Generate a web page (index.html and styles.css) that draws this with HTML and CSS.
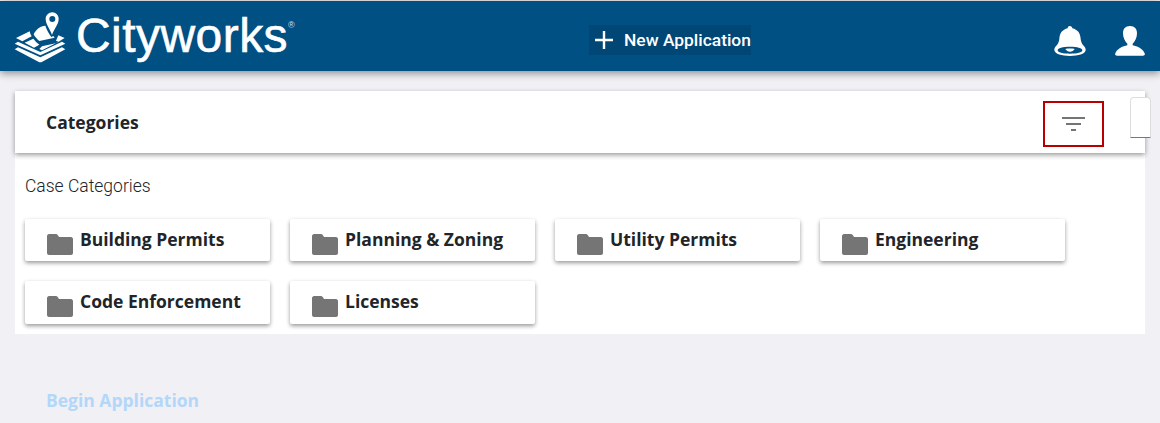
FILE: index.html
```html
<!DOCTYPE html>
<html lang="en">
<head>
<meta charset="utf-8">
<title>Cityworks</title>
<link rel="stylesheet" href="styles.css">
</head>
<body>
<header class="topbar">
  <div class="brand">
    <svg class="logo-mark" viewBox="0 0 195 180" width="65" height="60" aria-hidden="true">
      <path fill="#fff" fill-rule="evenodd" d="M127 22c-11 0-20 9-20 20 0 16 13 30 19 48 6-18 20-32 20-48 0-11-8-20-19-20zm0 11a9 9 0 1 1 0 18 9 9 0 0 1 0-18z"/>
      <path fill="#fff" d="M71 88c7-15 20-26 35-26 4 12 10 22 18 34l6-3 4 5-46 10c-7-6-13-12-17-20z"/>
      <path fill="#fff" d="M18 99l41-20c1 6 3 11 6 15L37 109zM44 113l26-12c5 7 11 13 18 18l-16 9zM96 124l44-10 24-13-68 35-8-4zM145 91l19 8-19 11-7-3z"/>
      <path fill="#fff" d="M14 116l10-6 67 31 65-31 10 6-75 35zM14 133l10-6 67 30 65-30 10 6-72 39h-6z"/>
    </svg>
    <span class="wordmark">Cityworks<sup class="reg">®</sup></span>
  </div>
  <div class="new-app">
    <svg viewBox="0 0 18 18" width="18" height="18" aria-hidden="true"><path d="M9 0v18M0 9h18" stroke="#fff" stroke-width="2.400"/></svg>
    <span>New Application</span>
  </div>
  <div class="top-icons">
    <svg viewBox="0 0 96 96" width="32" height="32" aria-hidden="true">
      <path fill="#fff" fill-rule="evenodd" d="M47 3c-4 0-6 3-6 7C25 14 17 24 16 42c-1 8-3 13-7 18C4 65 0 70 1 76c2 11 22 17 47 17s45-6 47-17c1-6-3-11-8-16-4-5-6-10-7-18-1-18-9-28-25-32 0-4-3-7-8-7zM48 65c22 0 37 4 37 11S70 86 48 86 11 83 11 76s15-11 37-11z"/>
      <path fill="#fff" d="M34 72c6-2 22-2 28 0-3 5-8 8-14 8s-11-3-14-8z"/>
    </svg>
    <svg viewBox="0 0 90 90" width="30" height="30" aria-hidden="true">
      <path fill="#fff" d="M45 0c14 0 21 9 21 22 0 13-6 25-13 31v5c14 3 32 10 37 27-1 2-3 4-6 4H6c-3 0-5-2-6-4 5-17 23-24 37-27v-5C30 47 24 35 24 22 24 9 31 0 45 0z"/>
    </svg>
  </div>
</header>

<main class="page">
  <section class="panel-head">
    <h1>Categories</h1>
    <button class="filter" type="button" aria-label="Filter">
      <svg viewBox="0 0 24 14" width="24" height="14" aria-hidden="true"><path d="M0 1h23M4 7h15M9 13h5" stroke="#757575" stroke-width="2"/></svg>
    </button>
    <div class="side-tab"></div>
  </section>
  <section class="categories">
    <p class="label">Case Categories</p>
    <div class="grid">
      <a class="tile"><svg class="folder" viewBox="0 0 26 21" width="26" height="21"><path fill="#757575" d="M2 0h7c1 0 2 1 3 3h12c1 0 2 1 2 2v14c0 1-1 2-2 2H2c-1 0-2-1-2-2V2c0-1 1-2 2-2z"/></svg><span>Building Permits</span></a>
      <a class="tile"><svg class="folder" viewBox="0 0 26 21" width="26" height="21"><path fill="#757575" d="M2 0h7c1 0 2 1 3 3h12c1 0 2 1 2 2v14c0 1-1 2-2 2H2c-1 0-2-1-2-2V2c0-1 1-2 2-2z"/></svg><span>Planning &amp; Zoning</span></a>
      <a class="tile"><svg class="folder" viewBox="0 0 26 21" width="26" height="21"><path fill="#757575" d="M2 0h7c1 0 2 1 3 3h12c1 0 2 1 2 2v14c0 1-1 2-2 2H2c-1 0-2-1-2-2V2c0-1 1-2 2-2z"/></svg><span>Utility Permits</span></a>
      <a class="tile"><svg class="folder" viewBox="0 0 26 21" width="26" height="21"><path fill="#757575" d="M2 0h7c1 0 2 1 3 3h12c1 0 2 1 2 2v14c0 1-1 2-2 2H2c-1 0-2-1-2-2V2c0-1 1-2 2-2z"/></svg><span>Engineering</span></a>
      <a class="tile"><svg class="folder" viewBox="0 0 26 21" width="26" height="21"><path fill="#757575" d="M2 0h7c1 0 2 1 3 3h12c1 0 2 1 2 2v14c0 1-1 2-2 2H2c-1 0-2-1-2-2V2c0-1 1-2 2-2z"/></svg><span>Code Enforcement</span></a>
      <a class="tile"><svg class="folder" viewBox="0 0 26 21" width="26" height="21"><path fill="#757575" d="M2 0h7c1 0 2 1 3 3h12c1 0 2 1 2 2v14c0 1-1 2-2 2H2c-1 0-2-1-2-2V2c0-1 1-2 2-2z"/></svg><span>Licenses</span></a>
    </div>
  </section>
  <h2 class="begin">Begin Application</h2>
</main>
</body>
</html>
```
FILE: styles.css
```css
html, body { margin: 0; padding: 0; }
body {
  width: 1160px; height: 423px; overflow: hidden;
  background: #f1f0f5;
  font-family: "Open Sans", sans-serif;
  color: #212529;
  box-sizing: border-box;
}
.topbar {
  height: 70px;
  margin-top: 1px;
  background: #005084;
  display: flex;
  align-items: center;
  box-shadow: 0 2px 8px rgba(0,0,0,.45);
  position: relative;
}
.brand { width: 579px; display: flex; align-items: center; padding-left: 10px; margin-bottom: 2px; }
.logo-mark { flex: none; }
.wordmark {
  font-family: "Liberation Sans", sans-serif;
  color: #fff;
  font-size: 48px;
  letter-spacing: .45px;
  line-height: 50px;
  -webkit-text-stroke: .6px #fff;
  margin: 2px 0 0 1px;
}
.reg { font-size: 9px; letter-spacing: 0; vertical-align: 24px; line-height: 0; opacity: .8; -webkit-text-stroke: 0; }
.new-app {
  display: flex; align-items: center; gap: 11px;
  width: 162px; box-sizing: border-box;
  height: 30px; padding: 0 0 0 6px;
  background: #004775;
  color: #fff;
  font-family: Roboto, sans-serif;
  font-weight: 500;
  font-size: 17.400px;
  white-space: nowrap;
  margin-top: 8px;
}
.new-app svg { flex: none; }
.top-icons { margin-left: auto; display: flex; align-items: center; gap: 29px; padding-right: 15px; padding-top: 10px; }
.page { padding: 20px 15px 0; }
.panel-head {
  height: 62px;
  background: #fff;
  display: flex; align-items: center;
  padding-left: 31px;
  box-shadow: 0 2px 5px rgba(0,0,0,.4);
  position: relative;
}
.panel-head h1 { flex: 1; margin: 0; font-size: 17.500px; font-weight: 700; color: #212529; }
.filter {
  width: 61px; height: 46px; margin-right: 26px; margin-top: 4px;
  background: #fff; border: 2px solid #b90000; padding: 0;
  display: flex; align-items: center; justify-content: center;
}
.side-tab {
  width: 21px; height: 41px; margin-right: -6px;
  background: #fff;
  border: 1px solid #ddd; border-bottom: 1px solid #777; border-radius: 4px 4px 0 0;
  box-sizing: border-box;
  align-self: flex-start; margin-top: 6px;
}
.categories { background: #fff; padding: 22px 10px 10px; }
.label { margin: 0 0 22px; font-family: Roboto, sans-serif; font-size: 17.500px; font-weight: 300; line-height: 22px; color: #212529; }
.grid { display: grid; grid-template-columns: repeat(4, 245px); column-gap: 20px; row-gap: 20px; }
.tile {
  height: 42px; background: #fff; border-radius: 2px;
  display: flex; align-items: flex-start; gap: 7px; padding-left: 22px;
  box-shadow: 0 2px 4px rgba(0,0,0,.4);
  font-weight: 700; font-size: 17.500px; line-height: 40px;
}
.tile:nth-child(n+5) { height: 43px; }
.folder { margin-top: 15px; flex: none; }
.begin { margin: 54px 0 0 31px; font-size: 17.500px; font-weight: 700; color: #b3d7f9; line-height: 24px; }
```
